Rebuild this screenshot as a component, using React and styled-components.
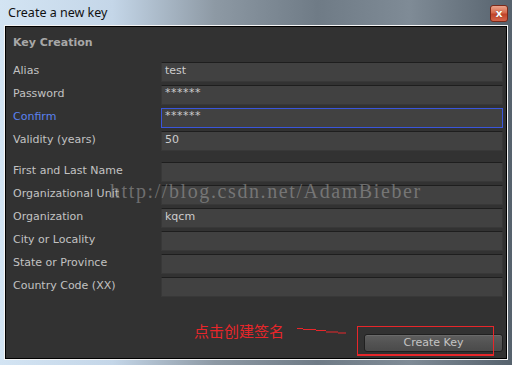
import React from 'react';
import styled, { createGlobalStyle } from 'styled-components';

const GlobalStyle = createGlobalStyle`
  html, body {
    margin: 0;
    padding: 0;
    background: #5a6570;
  }
`;

const Window = styled.div`
  position: relative;
  width: 512px;
  height: 365px;
  display: flex;
  flex-direction: column;
  box-sizing: border-box;
  padding: 0 4px 5px 4px;
  background: linear-gradient(90deg, #d3e4f3 0%, #c4d6e8 22%, #8d99a4 42%, #6f7b86 62%, #7f8b96 80%, #56626d 100%);
  overflow: hidden;
`;

const TitleBar = styled.div`
  height: 25px;
  flex: none;
  display: flex;
  align-items: center;
  justify-content: space-between;
  padding-left: 4px;
`;

const Title = styled.div`
  font-family: "Noto Sans", "Liberation Sans", sans-serif;
  font-size: 12.5px;
  color: #111;
`;

const CloseButton = styled.div`
  width: 18px;
  height: 17px;
  margin-top: 2px;
  box-sizing: border-box;
  border: 1px solid #7a2a1a;
  border-radius: 3px;
  background: linear-gradient(180deg, #eaa48c 0%, #d66a4c 45%, #c0442a 55%, #d5654a 100%);
  display: flex;
  align-items: center;
  justify-content: center;
  color: #fff;
  font-family: "DejaVu Sans", sans-serif;
  font-weight: bold;
  font-size: 11px;
  line-height: 1;
  text-shadow: 0 0 1px #5a1a10;
`;

const Client = styled.div`
  position: relative;
  flex: 1;
  box-sizing: border-box;
  border: 1px solid #f4f4f4;
  box-shadow: inset 0 0 0 1px #000;
  background: #323232;
  padding: 9px 4px 0 8px;
  display: flex;
  flex-direction: column;
`;

const SectionHeader = styled.div`
  font-family: "DejaVu Sans", sans-serif;
  font-size: 11px;
  font-weight: bold;
  color: #a8a8a8;
  height: 16px;
  line-height: 15px;
  margin-bottom: 11px;
`;

const Group = styled.div`
  display: grid;
  grid-template-columns: 148px 1fr;
  row-gap: 3px;
  margin-bottom: ${p => p.$gap || 0}px;
`;

const Label = styled.div`
  font-family: "DejaVu Sans", sans-serif;
  font-size: 11px;
  color: ${p => (p.$active ? '#5b82f0' : '#c2c2c2')};
  height: 20px;
  line-height: 18px;
  white-space: nowrap;
`;

const Field = styled.div`
  height: 20px;
  box-sizing: border-box;
  background: #414141;
  border: 1px solid ${p => (p.$active ? '#3a56dc' : '#383838')};
  border-top-color: ${p => (p.$active ? '#3a56dc' : '#1e1e1e')};
  padding: 0 3px;
  font-family: "DejaVu Sans", sans-serif;
  font-size: 11px;
  line-height: ${p => (p.$masked ? '13px' : '16px')};
  color: #cdcdcd;
  letter-spacing: ${p => (p.$masked ? '0.5px' : '0')};
`;

const Footer = styled.div`
  position: relative;
  flex: 1;
  display: flex;
  align-items: flex-start;
  justify-content: flex-end;
  padding-top: 37px;
`;

const Button = styled.div`
  width: 139px;
  height: 18px;
  box-sizing: border-box;
  border: 1px solid #202020;
  border-radius: 3px;
  background: linear-gradient(180deg, #5e5e5e 0%, #535353 50%, #4a4a4a 100%);
  box-shadow: inset 0 1px 0 #6a6a6a;
  font-family: "DejaVu Sans", sans-serif;
  font-size: 11px;
  line-height: 16px;
  color: #c4c4c4;
  text-align: center;
`;

const Annotation = styled.div`
  position: absolute;
  left: 181px;
  top: 24px;
  display: flex;
  align-items: center;
  gap: 12px;
  font-family: "Noto Sans CJK SC", sans-serif;
  font-size: 15px;
  color: #e8262a;
  line-height: 20px;
`;

const RedFrame = styled.div`
  position: absolute;
  left: 344px;
  top: 29px;
  width: 137px;
  height: 30px;
  box-sizing: border-box;
  border: 1px solid #e8262a;
  border-bottom-width: 2px;
`;

const Watermark = styled.div`
  position: absolute;
  left: 105px;
  top: 154px;
  font-family: "Liberation Serif", "DejaVu Serif", serif;
  font-size: 20px;
  letter-spacing: 1.6px;
  line-height: 23px;
  color: rgba(170, 170, 170, 0.5);
  pointer-events: none;
  white-space: nowrap;
`;

const topRows = [
  { label: 'Alias', value: 'test' },
  { label: 'Password', value: '******', masked: true },
  { label: 'Confirm', value: '******', masked: true, active: true },
  { label: 'Validity (years)', value: '50' },
];

const bottomRows = [
  { label: 'First and Last Name', value: '' },
  { label: 'Organizational Unit', value: '' },
  { label: 'Organization', value: 'kqcm' },
  { label: 'City or Locality', value: '' },
  { label: 'State or Province', value: '' },
  { label: 'Country Code (XX)', value: '' },
];

function Rows({ rows, gap }) {
  return (
    <Group $gap={gap}>
      {rows.map(r => (
        <React.Fragment key={r.label}>
          <Label $active={r.active}>{r.label}</Label>
          <Field $active={r.active} $masked={r.masked}>{r.value}</Field>
        </React.Fragment>
      ))}
    </Group>
  );
}

export default function App() {
  return (
    <>
      <GlobalStyle />
      <Window>
        <TitleBar>
          <Title>Create a new key</Title>
          <CloseButton>x</CloseButton>
        </TitleBar>
        <Client>
          <SectionHeader>Key Creation</SectionHeader>
          <Rows rows={topRows} gap={11} />
          <Rows rows={bottomRows} />
          <Footer>
            <Annotation>
              <span>点击创建签名</span>
              <svg width="52" height="8" viewBox="0 0 52 8">
                <path d="M1 1.5 H7 M7 2.5 H20 M20 3.5 H30 M30 5 H42 M42 6 H50" stroke="#e8262a" strokeWidth="1.2" fill="none" />
              </svg>
            </Annotation>
            <Button>Create Key</Button>
            <RedFrame />
          </Footer>
          <Watermark>http://blog.csdn.net/AdamBieber</Watermark>
        </Client>
      </Window>
    </>
  );
}
